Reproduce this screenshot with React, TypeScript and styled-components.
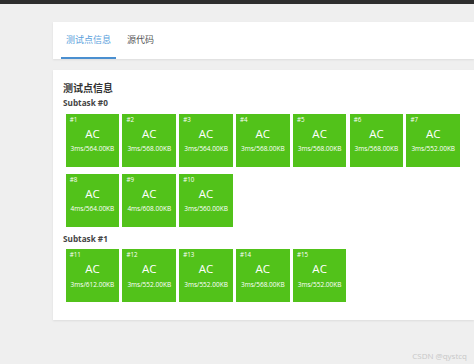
import React from "react";
import { styled, createGlobalStyle } from "styled-components";

const GlobalStyle = createGlobalStyle`
    html, body {
        margin: 0;
        padding: 0;
        background: #efefef;
        font-family: "Open Sans", "Noto Sans CJK SC", sans-serif;
    }
`

const Page = styled.div`
    position: relative;
    width: 474px;
    height: 364px;
    overflow: hidden;
    background: #efefef;
`
const TopBar = styled.div`
    height: 4px;
    background: #2e2e2e;
`
const Main = styled.div`
    padding: 18px 0 0 53px;
`
const TabCard = styled.div`
    display: flex;
    height: 37px;
    padding-left: 8px;
    background: #fff;
    box-shadow: 0 1px 2px rgba(0,0,0,0.08);
`
const Tab = styled.div<{ $active?: boolean }>`
    display: flex;
    align-items: center;
    padding: 0 5px;
    margin-right: 6px;
    font-size: 9px;
    color: ${p => p.$active ? "#5a9fdc" : "#555"};
    border-bottom: 2px solid ${p => p.$active ? "#4a8fd0" : "transparent"};
`
const Card = styled.div`
    margin-top: 11px;
    padding: 11px 8px 18px 10px;
    background: #fff;
    box-shadow: 0 1px 2px rgba(0,0,0,0.08);
`
const Title = styled.div`
    font-family: "Noto Sans CJK SC", sans-serif;
    font-size: 10px;
    line-height: 14px;
    font-weight: 700;
    color: #333;
`
const SubtaskLabel = styled.div<{ $first?: boolean }>`
    margin-top: ${p => p.$first ? "2px" : "6px"};
    margin-bottom: 4.5px;
    font-size: 8.2px;
    line-height: 12px;
    font-weight: 700;
    color: #444;
`
const Grid = styled.div`
    display: flex;
    flex-wrap: wrap;
    column-gap: 3.3px;
    row-gap: 7px;
    padding-left: 2.7px;
`
const Tile = styled.div`
    display: flex;
    flex-direction: column;
    width: 53.5px;
    height: 53px;
    box-sizing: border-box;
    padding: 2px 0 0 4px;
    background: #52c21a;
    color: #fff;
`
const Num = styled.div`
    font-size: 6.2px;
    line-height: 8px;
`
const Verdict = styled.div`
    margin-top: 2px;
    padding-right: 4px;
    text-align: center;
    font-size: 11.5px;
    line-height: 16px;
`
const Stat = styled.div`
    margin-top: 2.5px;
    padding-right: 4px;
    text-align: center;
    font-size: 6.5px;
    line-height: 10px;
    white-space: nowrap;
`
const Watermark = styled.div`
    position: absolute;
    right: 7px;
    bottom: 3px;
    font-size: 8px;
    color: #c8c8c8;
`

const subtasks = [
    {
        name: "Subtask #0",
        cases: [
            "3ms/564.00KB", "3ms/568.00KB", "3ms/564.00KB", "3ms/568.00KB",
            "3ms/568.00KB", "3ms/568.00KB", "3ms/552.00KB", "4ms/564.00KB",
            "4ms/608.00KB", "3ms/560.00KB",
        ],
    },
    {
        name: "Subtask #1",
        cases: ["3ms/612.00KB", "3ms/552.00KB", "3ms/552.00KB", "3ms/568.00KB", "3ms/552.00KB"],
    },
]

export default function App() {
    let n = 0
    return (
        <>
            <GlobalStyle />
            <Page>
                <TopBar />
                <Main>
                    <TabCard>
                        <Tab $active>测试点信息</Tab>
                        <Tab>源代码</Tab>
                    </TabCard>
                    <Card>
                        <Title>测试点信息</Title>
                        {subtasks.map((s, i) => (
                            <div key={s.name}>
                                <SubtaskLabel $first={i === 0}>{s.name}</SubtaskLabel>
                                <Grid>
                                    {s.cases.map(c => {
                                        n++
                                        return (
                                            <Tile key={n}>
                                                <Num>#{n}</Num>
                                                <Verdict>AC</Verdict>
                                                <Stat>{c}</Stat>
                                            </Tile>
                                        )
                                    })}
                                </Grid>
                            </div>
                        ))}
                    </Card>
                </Main>
                <Watermark>CSDN @qystcq</Watermark>
            </Page>
        </>
    )
}
